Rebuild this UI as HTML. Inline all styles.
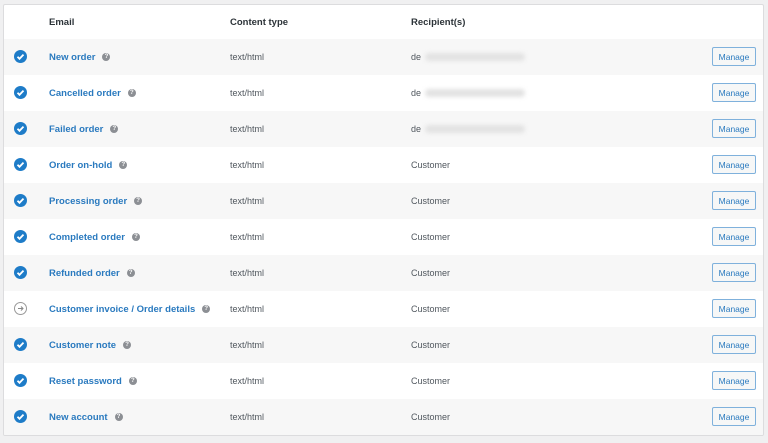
<!DOCTYPE html>
<html><head><style>
body{margin:0;width:768px;height:443px;background:#f0f0f1;font-family:"Liberation Sans",sans-serif;overflow:hidden;position:relative}
.box{position:absolute;left:3px;top:4px;width:761px;height:432px;background:#fff;border:1px solid #dcdcde;box-sizing:border-box;border-radius:2px;overflow:hidden}
.hdr{position:absolute;left:0;top:0;width:100%;height:34px;border-bottom:1px solid #e2e2e4;font-size:9.5px;font-weight:bold;color:#2c3338}
.hdr span{position:absolute;top:12px}
.row{position:absolute;left:0;width:100%;height:36px;font-size:9px;color:#50575e}
.row.g{background:#f7f7f7}
.row>*{position:absolute}
.ic{left:10px;top:11px;width:13px;height:13px;border-radius:50%;background:#1e7cc8}
.ic svg{position:absolute;left:0;top:0}
.ic.o{background:#fff;border:1px solid #999;box-sizing:border-box}
.nm{left:45px;top:13px;font-weight:bold;color:#2a7abf;font-size:9.5px;line-height:11px}
.q{display:inline-block;width:8px;height:8px;border-radius:50%;background:#8c8f94;color:#fff;font-size:6px;text-align:center;line-height:8px;margin-left:7px;vertical-align:middle}
.ct{left:226px;top:13px}
.rc{left:407px;top:13px}
.blur{position:absolute;left:14px;top:1px;width:100px;height:8px;background:#e2e2e2;filter:blur(2px);border-radius:4px}
.btn{left:708px;top:8px;width:44px;height:19px;border:1px solid #7fb1dc;border-radius:2px;box-sizing:border-box;color:#2a7abf;font-size:8.5px;display:flex;align-items:center;justify-content:center;background:#f6f7f7}
</style></head><body>
<div class="box">
<div class="hdr"><span style="left:45px">Email</span><span style="left:226px">Content type</span><span style="left:407px">Recipient(s)</span></div>

<div class="row g" style="top:34px"><div class="ic"><svg width="13" height="13"><path d="M3.5 6.8l2 2 4-4.2" stroke="#fff" stroke-width="1.8" fill="none"/></svg></div><div class="nm">New order<span class="q">?</span></div><div class="ct">text/html</div><div class="rc">de<span class="blur"></span></div><div class="btn">Manage</div></div>
<div class="row" style="top:70px"><div class="ic"><svg width="13" height="13"><path d="M3.5 6.8l2 2 4-4.2" stroke="#fff" stroke-width="1.8" fill="none"/></svg></div><div class="nm">Cancelled order<span class="q">?</span></div><div class="ct">text/html</div><div class="rc">de<span class="blur"></span></div><div class="btn">Manage</div></div>
<div class="row g" style="top:106px"><div class="ic"><svg width="13" height="13"><path d="M3.5 6.8l2 2 4-4.2" stroke="#fff" stroke-width="1.8" fill="none"/></svg></div><div class="nm">Failed order<span class="q">?</span></div><div class="ct">text/html</div><div class="rc">de<span class="blur"></span></div><div class="btn">Manage</div></div>
<div class="row" style="top:142px"><div class="ic"><svg width="13" height="13"><path d="M3.5 6.8l2 2 4-4.2" stroke="#fff" stroke-width="1.8" fill="none"/></svg></div><div class="nm">Order on-hold<span class="q">?</span></div><div class="ct">text/html</div><div class="rc">Customer</div><div class="btn">Manage</div></div>
<div class="row g" style="top:178px"><div class="ic"><svg width="13" height="13"><path d="M3.5 6.8l2 2 4-4.2" stroke="#fff" stroke-width="1.8" fill="none"/></svg></div><div class="nm">Processing order<span class="q">?</span></div><div class="ct">text/html</div><div class="rc">Customer</div><div class="btn">Manage</div></div>
<div class="row" style="top:214px"><div class="ic"><svg width="13" height="13"><path d="M3.5 6.8l2 2 4-4.2" stroke="#fff" stroke-width="1.8" fill="none"/></svg></div><div class="nm">Completed order<span class="q">?</span></div><div class="ct">text/html</div><div class="rc">Customer</div><div class="btn">Manage</div></div>
<div class="row g" style="top:250px"><div class="ic"><svg width="13" height="13"><path d="M3.5 6.8l2 2 4-4.2" stroke="#fff" stroke-width="1.8" fill="none"/></svg></div><div class="nm">Refunded order<span class="q">?</span></div><div class="ct">text/html</div><div class="rc">Customer</div><div class="btn">Manage</div></div>
<div class="row" style="top:286px"><div class="ic o"><svg width="11" height="11"><path d="M3 5.5h5M6 3.5l2 2-2 2" stroke="#888" stroke-width="1" fill="none"/></svg></div><div class="nm">Customer invoice / Order details<span class="q">?</span></div><div class="ct">text/html</div><div class="rc">Customer</div><div class="btn">Manage</div></div>
<div class="row g" style="top:322px"><div class="ic"><svg width="13" height="13"><path d="M3.5 6.8l2 2 4-4.2" stroke="#fff" stroke-width="1.8" fill="none"/></svg></div><div class="nm">Customer note<span class="q">?</span></div><div class="ct">text/html</div><div class="rc">Customer</div><div class="btn">Manage</div></div>
<div class="row" style="top:358px"><div class="ic"><svg width="13" height="13"><path d="M3.5 6.8l2 2 4-4.2" stroke="#fff" stroke-width="1.8" fill="none"/></svg></div><div class="nm">Reset password<span class="q">?</span></div><div class="ct">text/html</div><div class="rc">Customer</div><div class="btn">Manage</div></div>
<div class="row g" style="top:394px"><div class="ic"><svg width="13" height="13"><path d="M3.5 6.8l2 2 4-4.2" stroke="#fff" stroke-width="1.8" fill="none"/></svg></div><div class="nm">New account<span class="q">?</span></div><div class="ct">text/html</div><div class="rc">Customer</div><div class="btn">Manage</div></div>
</div>
</body></html>
